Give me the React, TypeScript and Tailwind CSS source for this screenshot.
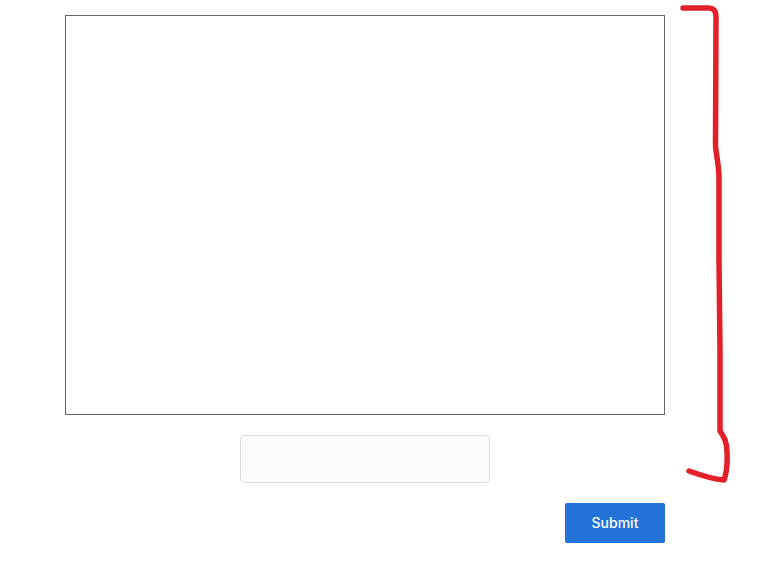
export default function App() {
  return (
    <div className="relative h-[564px] w-[779px] overflow-hidden bg-white font-['Inter',sans-serif]">
      <div className="ml-[65px] flex w-[600px] flex-col pt-[15px]">
        <div className="h-[400px] w-[600px] border border-[#666666] bg-white" />
        <div className="mt-5 flex justify-center">
          <input
            type="text"
            className="h-12 w-[250px] rounded-[4px] border border-[#dcdcdc] bg-[#fbfbfb] px-3 text-sm outline-none"
          />
        </div>
        <div className="mt-5 flex justify-end">
          <button className="h-10 w-[100px] rounded-[2px] bg-[#2272d8] text-sm font-medium text-white">
            Submit
          </button>
        </div>
      </div>
      {/* hand-drawn red bracket on top of the page */}
      <svg className="absolute left-0 top-0" width="779" height="564" fill="none" aria-hidden>
        <path
          d="M683 8 L708 8 C713 8 716 10 716 17 L715.5 145 C716 155 719 165 719 178 L719 260 L720 350 L720 431 C724 437 727 442 727 452 C727.5 462 727 472 724 480 C712 479 700 475 689 471"
          stroke="#e2202a"
          strokeWidth="5.5"
          strokeLinecap="round"
          strokeLinejoin="round"
        />
      </svg>
    </div>
  );
}
